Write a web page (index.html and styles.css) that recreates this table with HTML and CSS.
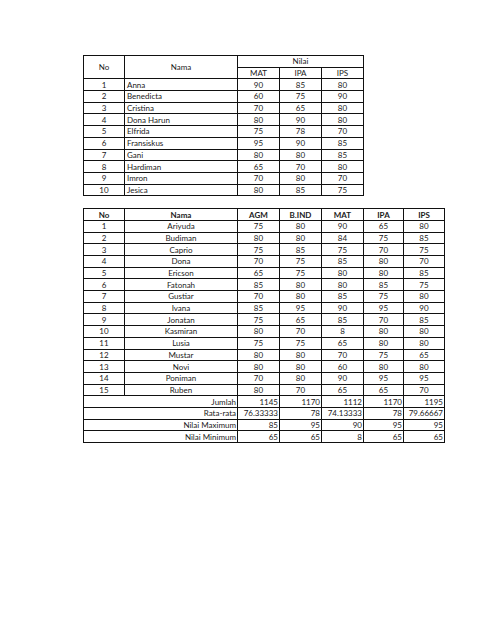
FILE: index.html
```html
<!DOCTYPE html>
<html>
<head>
<meta charset="utf-8">
<link rel="stylesheet" href="styles.css">
</head>
<body>
<div class="page">
<table class="grid t1">
  <colgroup><col class="c-no"><col class="c-nama"><col class="c-n"><col class="c-n"><col class="c-n"></colgroup>
  <tr><td rowspan="2" class="c">No</td><td rowspan="2" class="c">Nama</td><td colspan="3" class="c">Nilai</td></tr>
  <tr><td class="c">MAT</td><td class="c">IPA</td><td class="c">IPS</td></tr>
  <tr><td class="c">1</td><td class="l">Anna</td><td class="c">90</td><td class="c">85</td><td class="c">80</td></tr>
  <tr><td class="c">2</td><td class="l">Benedicta</td><td class="c">60</td><td class="c">75</td><td class="c">90</td></tr>
  <tr><td class="c">3</td><td class="l">Cristina</td><td class="c">70</td><td class="c">65</td><td class="c">80</td></tr>
  <tr><td class="c">4</td><td class="l">Dona Harun</td><td class="c">80</td><td class="c">90</td><td class="c">80</td></tr>
  <tr><td class="c">5</td><td class="l">Elfrida</td><td class="c">75</td><td class="c">78</td><td class="c">70</td></tr>
  <tr><td class="c">6</td><td class="l">Fransiskus</td><td class="c">95</td><td class="c">90</td><td class="c">85</td></tr>
  <tr><td class="c">7</td><td class="l">Gani</td><td class="c">80</td><td class="c">80</td><td class="c">85</td></tr>
  <tr><td class="c">8</td><td class="l">Hardiman</td><td class="c">65</td><td class="c">70</td><td class="c">80</td></tr>
  <tr><td class="c">9</td><td class="l">Imron</td><td class="c">70</td><td class="c">80</td><td class="c">70</td></tr>
  <tr><td class="c">10</td><td class="l">Jesica</td><td class="c">80</td><td class="c">85</td><td class="c">75</td></tr>
</table>

<table class="grid t2">
  <colgroup><col class="c-no"><col class="c-nama"><col class="c-n"><col class="c-n"><col class="c-n"><col class="c-n2"><col class="c-n3"></colgroup>
  <tr class="head"><td class="c">No</td><td class="c">Nama</td><td class="c">AGM</td><td class="c">B.IND</td><td class="c">MAT</td><td class="c">IPA</td><td class="c">IPS</td></tr>
  <tr><td class="c">1</td><td class="c">Ariyuda</td><td class="c">75</td><td class="c">80</td><td class="c">90</td><td class="c">65</td><td class="c">80</td></tr>
  <tr><td class="c">2</td><td class="c">Budiman</td><td class="c">80</td><td class="c">80</td><td class="c">84</td><td class="c">75</td><td class="c">85</td></tr>
  <tr><td class="c">3</td><td class="c">Caprio</td><td class="c">75</td><td class="c">85</td><td class="c">75</td><td class="c">70</td><td class="c">75</td></tr>
  <tr><td class="c">4</td><td class="c">Dona</td><td class="c">70</td><td class="c">75</td><td class="c">85</td><td class="c">80</td><td class="c">70</td></tr>
  <tr><td class="c">5</td><td class="c">Ericson</td><td class="c">65</td><td class="c">75</td><td class="c">80</td><td class="c">80</td><td class="c">85</td></tr>
  <tr><td class="c">6</td><td class="c">Fatonah</td><td class="c">85</td><td class="c">80</td><td class="c">80</td><td class="c">85</td><td class="c">75</td></tr>
  <tr><td class="c">7</td><td class="c">Gustiar</td><td class="c">70</td><td class="c">80</td><td class="c">85</td><td class="c">75</td><td class="c">80</td></tr>
  <tr><td class="c">8</td><td class="c">Ivana</td><td class="c">85</td><td class="c">95</td><td class="c">90</td><td class="c">95</td><td class="c">90</td></tr>
  <tr><td class="c">9</td><td class="c">Jonatan</td><td class="c">75</td><td class="c">65</td><td class="c">85</td><td class="c">70</td><td class="c">85</td></tr>
  <tr><td class="c">10</td><td class="c">Kasmiran</td><td class="c">80</td><td class="c">70</td><td class="c">8</td><td class="c">80</td><td class="c">80</td></tr>
  <tr><td class="c">11</td><td class="c">Lusia</td><td class="c">75</td><td class="c">75</td><td class="c">65</td><td class="c">80</td><td class="c">80</td></tr>
  <tr><td class="c">12</td><td class="c">Mustar</td><td class="c">80</td><td class="c">80</td><td class="c">70</td><td class="c">75</td><td class="c">65</td></tr>
  <tr><td class="c">13</td><td class="c">Novi</td><td class="c">80</td><td class="c">80</td><td class="c">60</td><td class="c">80</td><td class="c">80</td></tr>
  <tr><td class="c">14</td><td class="c">Poniman</td><td class="c">70</td><td class="c">80</td><td class="c">90</td><td class="c">95</td><td class="c">95</td></tr>
  <tr><td class="c">15</td><td class="c">Ruben</td><td class="c">80</td><td class="c">70</td><td class="c">65</td><td class="c">65</td><td class="c">70</td></tr>
  <tr><td colspan="2" class="r">Jumlah</td><td class="r">1145</td><td class="r">1170</td><td class="r">1112</td><td class="r">1170</td><td class="r">1195</td></tr>
  <tr><td colspan="2" class="r">Rata-rata</td><td class="r">76.33333</td><td class="r">78</td><td class="r">74.13333</td><td class="r">78</td><td class="r">79.66667</td></tr>
  <tr><td colspan="2" class="r">Nilai Maximum</td><td class="r">85</td><td class="r">95</td><td class="r">90</td><td class="r">95</td><td class="r">95</td></tr>
  <tr><td colspan="2" class="r">Nilai Minimum</td><td class="r">65</td><td class="r">65</td><td class="r">8</td><td class="r">65</td><td class="r">65</td></tr>
</table>
</div>
</body>
</html>
```
FILE: styles.css
```css
html, body {
  margin: 0;
  padding: 0;
  background: #ffffff;
}
.page {
  padding: 55px 0 0 83px;
  display: flex;
  flex-direction: column;
  align-items: flex-start;
  gap: 12px;
  font-family: Lato, "Liberation Sans", sans-serif;
  font-size: 8px;
  color: #1a1a1a;
}
.grid {
  border-collapse: collapse;
  table-layout: fixed;
}
.t1 { width: 280px; }
.t2 { width: 361px; }
.c-no { width: 41px; }
.c-nama { width: 113px; }
.c-n { width: 42px; }
.c-n2 { width: 40px; }
.c-n3 { width: 41px; }
.grid td {
  border: 1px solid #111;
  padding: 0 2px;
  height: 10.7px;
  line-height: 10px;
  white-space: nowrap;
  overflow: hidden;
}
.grid .c { text-align: center; }
.grid .l { text-align: left; }
.grid .r { text-align: right; padding-right: 1px; }
.t2 .head td { font-weight: bold; }
```
